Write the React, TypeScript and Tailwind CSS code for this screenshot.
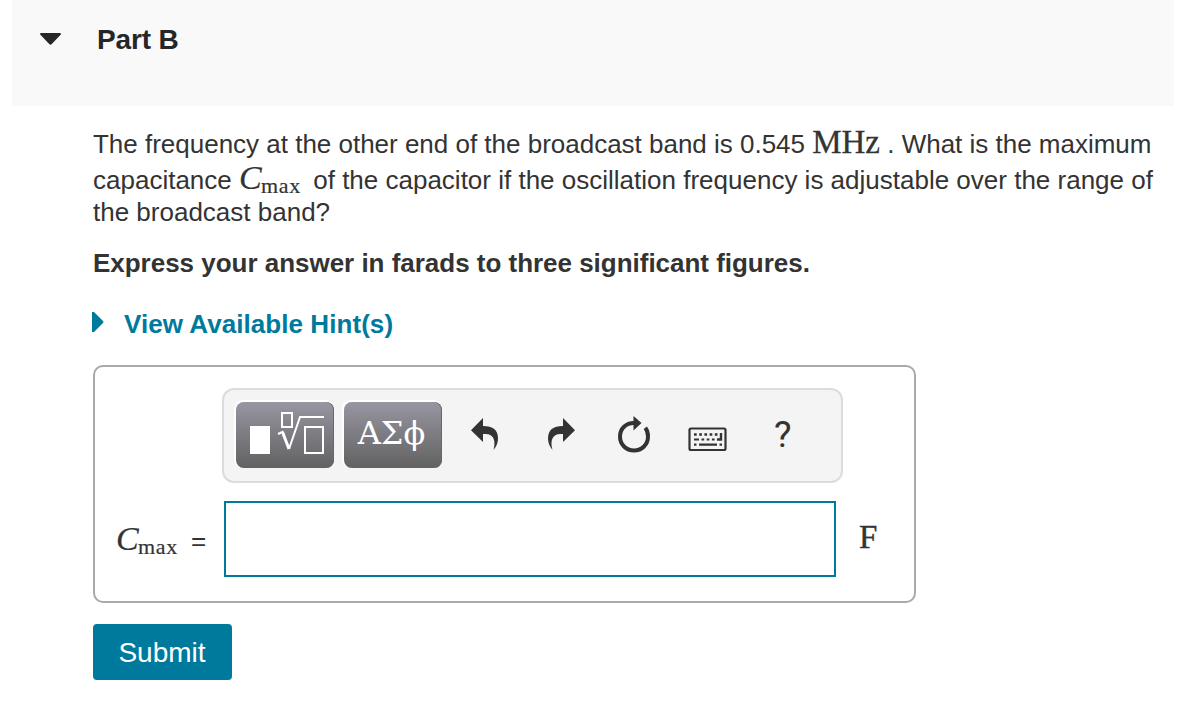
import { useState } from 'react';
import type { ReactNode } from 'react';

const MathText = ({ children }: { children: ReactNode }) => (
  <span className="font-['Liberation_Serif',serif] text-[33px] leading-0 [-webkit-text-stroke:0.3px_#333]">{children}</span>
);

// C with an upright "max" subscript
const CMax = () => (
  <span className="inline-flex items-baseline font-['Liberation_Serif',serif] leading-0 [-webkit-text-stroke:0.2px_#333]">
    <span className="w-[22px] text-[34px] italic leading-0">C</span>
    <span className="relative top-[4px] inline-block w-[42px] text-[22px] leading-0 tracking-[0.7px]">max</span>
  </span>
);

const TemplatesIcon = () => (
  <svg width="98" height="66" viewBox="0 0 98 66" fill="none" stroke="white" className="block">
    <rect x="14" y="24" width="20" height="28" fill="white" stroke="none" />
    <rect x="46" y="11" width="10" height="14" strokeWidth="2" />
    <rect x="69" y="25" width="18" height="26" strokeWidth="2" />
    <path d="M42 32l5.500-2.500" strokeWidth="2" />
    <path d="M46.500 30l6.500 17" strokeWidth="3" />
    <path d="M53 47L64 15h24" strokeWidth="2" />
  </svg>
);

const UndoIcon = () => (
  <svg width="28" height="32" viewBox="0 0 28 32" fill="#333" className="block">
    <path d="M0 12.200L12 0v8c10 0 15 4 15 12.500 0 4-1.500 8-4.500 11.500 2.500-9 .5-16-8-16H12v8z" />
  </svg>
);

const ResetIcon = () => (
  <svg width="34" height="38" viewBox="0 0 34 38" fill="none" className="block">
    <path d="M17 7C9 7 3 12.500 3 20.500S9 34.500 17 34.500s14-6 14-14c0-3.300-.9-6.300-2.700-8.700" stroke="#333" strokeWidth="4" />
    <path d="M16.500 0l8 7-8 7.500z" fill="#333" />
  </svg>
);

const KeyboardIcon = () => (
  <svg width="40" height="25" viewBox="0 0 40 25" fill="none" stroke="#333" className="block">
    <rect x="1.500" y="1.500" width="36" height="21.500" rx="1.500" strokeWidth="2.200" />
    <path d="M6 7.500h24" strokeWidth="2.500" strokeDasharray="2.700 2.500" />
    <path d="M6 12.500h5M13.500 12.500h2.700M18.700 12.500h2.700M23.900 12.500h2.700" strokeWidth="2.200" />
    <path d="M33 6v6.500h-4" strokeWidth="2.400" />
    <path d="M6 17.700h2.500M11 17.700h18M31.500 17.700h2.500" strokeWidth="2.200" />
  </svg>
);

const paletteButton =
  'h-[66px] w-[98px] shrink-0 overflow-hidden rounded-[8px] bg-linear-to-b from-[#9896a2] to-[#626262] shadow-[inset_-1px_0_0_#686868,-1px_-1px_0_1px_#fff]';

export default function App() {
  const [answer, setAnswer] = useState('');

  return (
    <main className="h-[711px] w-[1191px] overflow-hidden bg-white font-['Liberation_Sans',Arial,sans-serif] text-[26px] leading-8 text-[#333]">
      <header className="ml-3 flex h-[106px] w-[1162px] items-start bg-[#f9f9f9] pt-[23px] pl-[28px] text-[#262626]">
        <svg width="21" height="12" viewBox="0 0 21 12" fill="currentColor" className="mt-[10px] block">
          <path d="M1.200 0h18.600c1.200 0 1.600 1 .8 1.800l-8.800 9.300c-.9.900-1.700.9-2.600 0L.4 1.800C-.4 1 0 0 1.200 0z" />
        </svg>
        <h1 className="mt-px ml-9 text-[28px] leading-8 font-bold tracking-[-0.15px]">Part B</h1>
      </header>

      <div className="pt-[22px] pl-[93px] whitespace-nowrap">
        {/* Question */}
        <div className="h-9 tracking-[-0.01px]">
          The frequency at the other end of the broadcast band is 0.545 <MathText>MHz</MathText> . What is the maximum
        </div>
        <div className="h-8">
          capacitance <CMax />{' '}
          <span className="ml-[3px]">of the capacitor if the oscillation frequency is adjustable over the range of</span>
        </div>
        <div className="h-8">the broadcast band?</div>
        <p className="mt-[19px] font-bold tracking-[-0.02px]">Express your answer in farads to three significant figures.</p>

        <button type="button" className="mt-[29px] flex h-8 items-start font-bold text-[#007a9c]">
          <svg width="12" height="20" viewBox="0 0 12 20" fill="currentColor" className="mt-[4px] -ml-px">
            <path d="M0 0h2l9 9q1 1 0 2l-9 9H0z" />
          </svg>
          <span className="ml-[20px] tracking-[0.06px]">View Available Hint(s)</span>
        </button>

        {/* Answer box */}
        <section className="mt-[25px] h-[238px] w-[823px] rounded-[10px] border-2 border-[#a9a9a9] pt-[21px]">
          <div className="ml-[127px] flex h-[95px] w-[621px] items-start rounded-[12px] border-2 border-[#dcdcdc] bg-[#f4f4f4] pt-[12px] pl-[12px]">
            <button type="button" aria-label="Templates" className={paletteButton}>
              <TemplatesIcon />
            </button>
            <button type="button" className={`${paletteButton} ml-[10px] pb-1 font-['DejaVu_Serif',serif] text-[32px] text-white`}>
              <span className="-ml-[3px] inline-block">ΑΣϕ</span>
            </button>
            <button type="button" aria-label="Undo" className="mt-4 ml-[29px]">
              <UndoIcon />
            </button>
            <button type="button" aria-label="Redo" className="mt-4 ml-[48px] -scale-x-100">
              <UndoIcon />
            </button>
            <button type="button" aria-label="Reset" className="mt-[14px] ml-[42px]">
              <ResetIcon />
            </button>
            <button type="button" aria-label="Keyboard shortcuts" className="mt-[25px] ml-[37px]">
              <KeyboardIcon />
            </button>
            <button type="button" className="mt-[17px] ml-[46px] font-[Roboto,sans-serif] text-[37px] leading-8">
              ?
            </button>
          </div>

          <div className="mt-[18px] flex h-[76px] items-start">
            <label htmlFor="capacitance" className="w-[129px] pt-[24px] pl-[21px]">
              <CMax />
              <span className="ml-[11px]">=</span>
            </label>
            <input
              id="capacitance"
              value={answer}
              onChange={(e) => setAnswer(e.target.value)}
              className="h-[76px] w-[612px] border-2 border-[#007a9c] bg-white px-3 outline-none"
            />
            <span className="mt-[20px] ml-[23px] font-['Liberation_Serif',serif] text-[33px] [-webkit-text-stroke:0.4px_#333]">F</span>
          </div>
        </section>

        <button type="button" className="mt-[21px] block h-14 w-[139px] rounded-[4px] bg-[#007a9c] pt-[2px] pr-px text-[28px] text-white">
          Submit
        </button>
      </div>
    </main>
  );
}
